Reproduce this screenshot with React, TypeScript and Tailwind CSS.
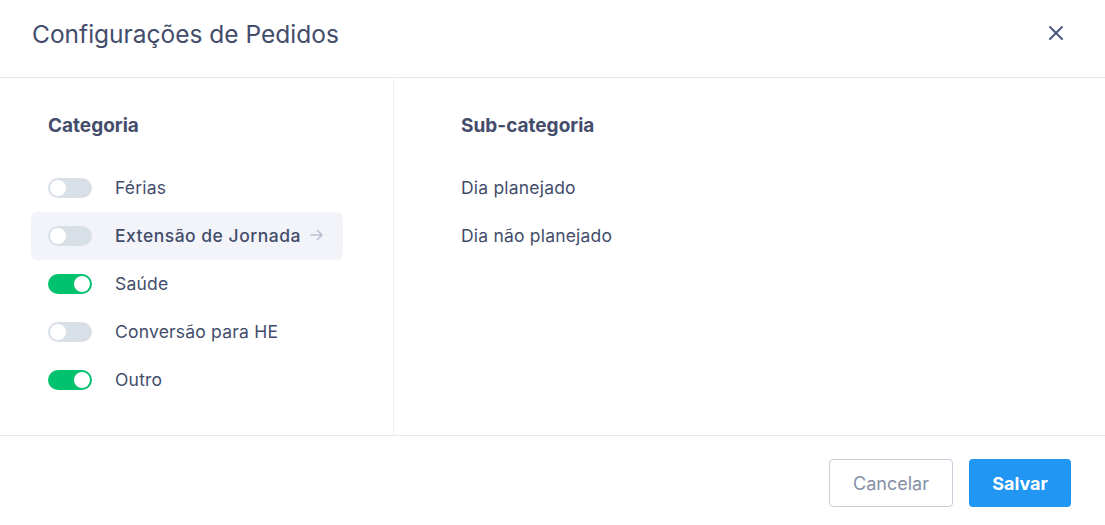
import React from "react";

const font = { fontFamily: "Inter, 'Noto Sans', sans-serif" };

function Toggle({ on }: { on: boolean }) {
  return (
    <div
      className={`flex h-[20px] w-[44px] shrink-0 items-center rounded-full p-[2px] ${
        on ? "justify-end bg-[#00c16e]" : "justify-start bg-[#d9dfe7]"
      }`}
    >
      <div className="h-[16px] w-[16px] rounded-full bg-white" />
    </div>
  );
}

const cats = [
  { label: "Férias", on: false },
  { label: "Extensão de Jornada", on: false, active: true },
  { label: "Saúde", on: true },
  { label: "Conversão para HE", on: false },
  { label: "Outro", on: true },
];

export default function App() {
  return (
    <div className="h-[525px] w-[1105px] bg-white text-[#434d6b]" style={font}>
      <div className="flex h-[78px] items-center justify-between border-b border-[#e3e8ef] pb-[9px] pl-[32px] pr-[40px]">
        <h1 className="text-[24.5px] font-normal text-[#434d6b]">Configurações de Pedidos</h1>
        <svg width="18" height="18" viewBox="0 0 18 18" className="mt-[-2px]">
          <path d="M3 3L15 15M15 3L3 15" stroke="#4b5780" strokeWidth="2" strokeLinecap="round" />
        </svg>
      </div>
      <div className="flex h-[358px] border-b border-[#e3e8ef]">
        <div className="w-[394px] shrink-0 border-r border-[#eef1f5] pl-[31px] pt-[36px]">
          <div className="pl-[17px] text-[19px] font-bold leading-[24px] text-[#434d6b]">Categoria</div>
          <div className="mt-[26px] flex flex-col">
            {cats.map((c) => (
              <div
                key={c.label}
                className={`flex h-[48px] w-[312px] items-center rounded-[6px] pl-[17px] ${
                  c.active ? "bg-[#f3f4f9]" : ""
                }`}
              >
                <Toggle on={c.on} />
                <span
                  className={`ml-[23px] text-[17.5px] ${
                    c.active ? "font-medium tracking-[0.5px]" : "tracking-[0.2px]"
                  }`}
                >
                  {c.label}
                </span>
                {c.active && (
                  <svg width="14" height="12" viewBox="0 0 14 12" className="ml-[9px] mt-[-2px]">
                    <path d="M1 6H12M7.5 1.5L12 6L7.5 10.5" stroke="#b8c0d8" strokeWidth="1.6" fill="none" strokeLinecap="round" strokeLinejoin="round" />
                  </svg>
                )}
              </div>
            ))}
          </div>
        </div>
        <div className="flex-1 pl-[67px] pt-[36px]">
          <div className="text-[19px] font-bold leading-[24px]">Sub-categoria</div>
          <div className="mt-[26px] flex flex-col">
            <div className="flex h-[48px] items-center text-[17.5px] tracking-[0.2px]">Dia planejado</div>
            <div className="flex h-[48px] items-center text-[17.5px] tracking-[0.2px]">Dia não planejado</div>
          </div>
        </div>
      </div>
      <div className="flex justify-end gap-[16px] pr-[34px] pt-[23px]">
        <button className="h-[48px] w-[124px] rounded-[4px] border border-[#c5cdd8] bg-white text-[18px] text-[#8590a5]">
          Cancelar
        </button>
        <button className="h-[48px] w-[102px] rounded-[4px] bg-[#2196f3] text-[18px] font-bold text-white">
          Salvar
        </button>
      </div>
    </div>
  );
}
